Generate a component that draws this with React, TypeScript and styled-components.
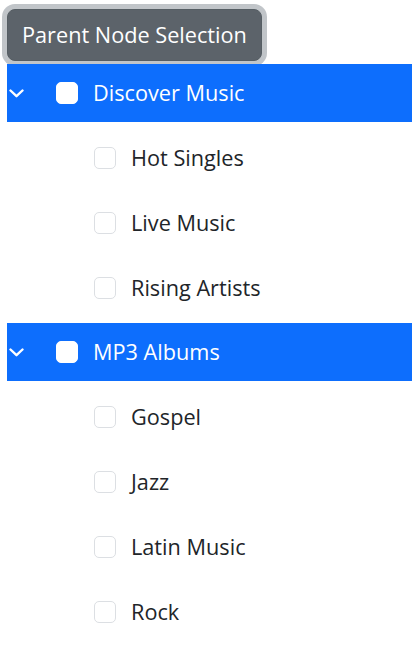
import React from "react";
import styled, { createGlobalStyle } from "styled-components";

const Global = createGlobalStyle`
  html, body { margin: 0; padding: 0; background: #fff; }
  body { font-family: "Open Sans", "Noto Sans", sans-serif; color: #212529; }
`;

const Page = styled.div`
  padding: 9px 3px 0 7px;
`;

const Toolbar = styled.div`
  display: flex;
  margin-bottom: 3px;
`;

const Button = styled.button`
  font-family: inherit;
  font-size: 21.7px;
  line-height: 30px;
  padding: 10px 14px;
  border: 1px solid #565e64;
  border-radius: 8px;
  background: #5c636a;
  color: #fff;
  box-shadow: 0 0 0 5px #c1c5c9;
  cursor: pointer;
`;

const Tree = styled.div`
  display: flex;
  flex-direction: column;
`;

const ParentRow = styled.div`
  position: relative;
  display: flex;
  align-items: center;
  height: 58px;
  background: #0d6efd;
  color: #fff;
  padding-left: 2px;
  font-size: 21.7px;
`;

const Chevron = styled.svg`
  width: 15px;
  height: 9px;
  flex: none;
  margin-right: 32px;
`;

const Box = styled.span<{ $parent?: boolean }>`
  flex: none;
  width: 22px;
  height: 22px;
  box-sizing: border-box;
  border-radius: 5px;
  background: #fff;
  border: 1px solid ${(p) => (p.$parent ? "#fff" : "#dcdfe3")};
  margin-right: 15px;
`;

const Group = styled.div`
  display: flex;
  flex-direction: column;
  padding: 3px 0;
`;

const ChildRow = styled.div`
  display: flex;
  align-items: center;
  height: 65px;
  padding-left: 87px;
  font-size: 21.7px;
  color: #212529;
`;

const Label = styled.span`
  line-height: 30px;
`;

const data = [
  { name: "Discover Music", children: ["Hot Singles", "Live Music", "Rising Artists"] },
  { name: "MP3 Albums", children: ["Gospel", "Jazz", "Latin Music", "Rock"] },
];

export default function App() {
  return (
    <>
      <Global />
      <Page>
        <Toolbar>
          <Button>Parent Node Selection</Button>
        </Toolbar>
        <Tree>
          {data.map((g) => (
            <React.Fragment key={g.name}>
              <ParentRow>
                <Chevron viewBox="0 0 15 9">
                  <polyline points="1.5,1.5 7.5,7.2 13.5,1.5" fill="none" stroke="#fff" strokeWidth="2.4" strokeLinecap="round" strokeLinejoin="round" />
                </Chevron>
                <Box $parent />
                <Label>{g.name}</Label>
              </ParentRow>
              <Group>
                {g.children.map((c) => (
                  <ChildRow key={c}>
                    <Box />
                    <Label>{c}</Label>
                  </ChildRow>
                ))}
              </Group>
            </React.Fragment>
          ))}
        </Tree>
      </Page>
    </>
  );
}
